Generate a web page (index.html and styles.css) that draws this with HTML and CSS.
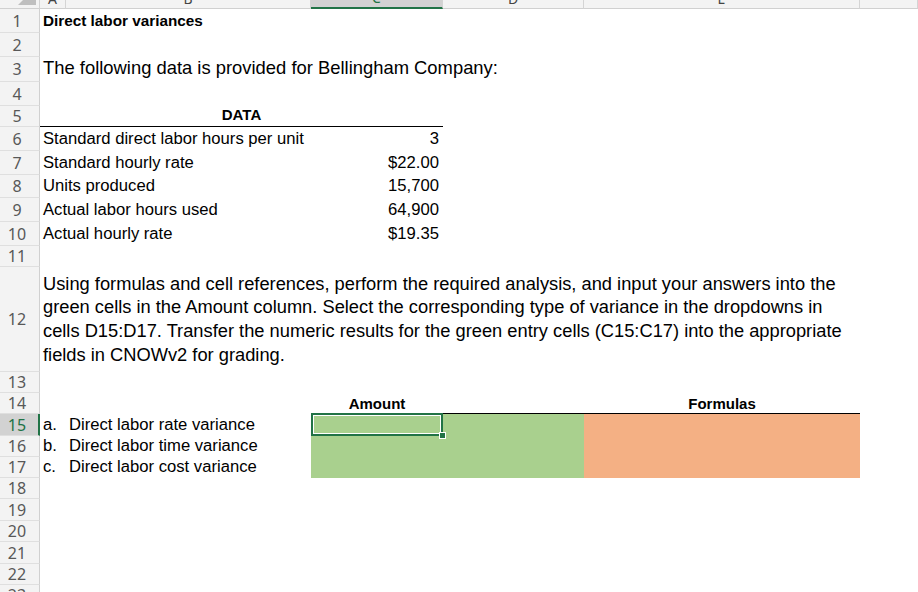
FILE: index.html
```html
<!DOCTYPE html>
<html lang="en">
<head>
    <meta charset="UTF-8">
    <meta name="viewport" content="width=device-width, initial-scale=1.0">
    <title>Direct labor variances</title>
    <link rel="stylesheet" href="styles.css">
</head>
<body>
    <div class="sheet">
        <!-- column headers (top half scrolled out of view) -->
        <div class="corner"><span class="corner-tri"></span></div>
        <div class="col-head">A</div>
        <div class="col-head">B</div>
        <div class="col-head selected">C</div>
        <div class="col-head">D</div>
        <div class="col-head">E</div>
        <div class="col-head"></div>

        <div class="row-head">1</div>
        <div class="cell span-all title">Direct labor variances</div>

        <div class="row-head">2</div>
        <div class="cell span-all"></div>

        <div class="row-head">3</div>
        <div class="cell span-all intro">The following data is provided for Bellingham Company:</div>

        <div class="row-head">4</div>
        <div class="cell span-all"></div>

        <div class="row-head">5</div>
        <div class="cell span-3 heading underline">DATA</div>
        <div class="cell span-3"></div>

        <div class="row-head">6</div>
        <div class="cell span-2 data">Standard direct labor hours per unit</div>
        <div class="cell data num">3</div>
        <div class="cell span-3"></div>

        <div class="row-head">7</div>
        <div class="cell span-2 data">Standard hourly rate</div>
        <div class="cell data num">$22.00</div>
        <div class="cell span-3"></div>

        <div class="row-head">8</div>
        <div class="cell span-2 data">Units produced</div>
        <div class="cell data num">15,700</div>
        <div class="cell span-3"></div>

        <div class="row-head">9</div>
        <div class="cell span-2 data">Actual labor hours used</div>
        <div class="cell data num">64,900</div>
        <div class="cell span-3"></div>

        <div class="row-head">10</div>
        <div class="cell span-2 data">Actual hourly rate</div>
        <div class="cell data num">$19.35</div>
        <div class="cell span-3"></div>

        <div class="row-head">11</div>
        <div class="cell span-all"></div>

        <div class="row-head">12</div>
        <div class="cell span-5 instructions">Using formulas and cell references, perform the required analysis, and input your answers into the green cells in the Amount column. Select the corresponding type of variance in the dropdowns in cells D15:D17. Transfer the numeric results for the green entry cells (C15:C17) into the appropriate fields in CNOWv2 for grading.</div>
        <div class="cell"></div>

        <div class="row-head">13</div>
        <div class="cell span-all"></div>

        <div class="row-head">14</div>
        <div class="cell span-2"></div>
        <div class="cell heading underline col-title">Amount</div>
        <div class="cell underline"></div>
        <div class="cell heading underline col-title">Formulas</div>
        <div class="cell"></div>

        <div class="row-head active">15</div>
        <div class="cell item">a.</div>
        <div class="cell item">Direct labor rate variance</div>
        <div class="cell entry active"></div>
        <div class="cell entry"></div>
        <div class="cell formula"></div>
        <div class="cell"></div>

        <div class="row-head">16</div>
        <div class="cell item">b.</div>
        <div class="cell item">Direct labor time variance</div>
        <div class="cell entry"></div>
        <div class="cell entry"></div>
        <div class="cell formula"></div>
        <div class="cell"></div>

        <div class="row-head">17</div>
        <div class="cell item">c.</div>
        <div class="cell item">Direct labor cost variance</div>
        <div class="cell entry"></div>
        <div class="cell entry"></div>
        <div class="cell formula"></div>
        <div class="cell"></div>

        <div class="row-head">18</div>
        <div class="cell span-all"></div>
        <div class="row-head">19</div>
        <div class="cell span-all"></div>
        <div class="row-head">20</div>
        <div class="cell span-all"></div>
        <div class="row-head">21</div>
        <div class="cell span-all"></div>
        <div class="row-head">22</div>
        <div class="cell span-all"></div>
        <div class="row-head">23</div>
        <div class="cell span-all"></div>
    </div>
</body>
</html>
```

FILE: styles.css
```css
body {
    margin: 0;
    background-color: #fff;
    overflow: hidden;
    font-family: 'Liberation Sans', Arial, sans-serif;
    color: #000;
}

.sheet {
    display: grid;
    grid-template-columns: 40px 26px 245px 132px 141px 276px 1fr;
    grid-template-rows:
        21px 24px 24px 25px 24px 21px
        24px 24px 23px 24px 24px 21px
        105px 21px 21px 22px 21px 21px
        21px 22px 21px 22px 21px 21px;
    margin-top: -12px;
}

/* headers */
.corner,
.col-head {
    position: relative;
    box-sizing: border-box;
    background-color: #f3f3f3;
    border-right: 1px solid #d4d4d4;
    border-bottom: 1px solid #d0d0d0;
    font-family: 'Noto Sans', sans-serif;
    font-size: 14px;
    color: #444;
    display: flex;
    align-items: center;
    justify-content: center;
}

.corner-tri {
    position: absolute;
    right: 3px;
    bottom: 3px;
    width: 0;
    height: 0;
    border-left: 18px solid transparent;
    border-bottom: 18px solid #bfbfbf;
}

.col-head.selected {
    background-color: #d2d2d2;
    color: #217346;
    border-bottom: 2px solid #217346;
}

.row-head {
    box-sizing: border-box;
    background-color: #f3f3f3;
    border-right: 1px solid #d0d0d0;
    border-bottom: 1px solid #dfdfdf;
    font-family: 'Noto Sans', sans-serif;
    font-size: 16px;
    color: #585858;
    display: flex;
    align-items: center;
    justify-content: center;
    padding-right: 5px;
}

.row-head.active {
    background-color: #d2d2d2;
    color: #217346;
    border-right: 2px solid #217346;
    padding-right: 4px;
}

/* cells */
.cell {
    box-sizing: border-box;
    display: flex;
    align-items: flex-end;
    padding: 0 3px 3px;
    white-space: nowrap;
    font-size: 16.65px;
}

.span-2 { grid-column: span 2; }
.span-3 { grid-column: span 3; }
.span-5 { grid-column: span 5; }
.span-all { grid-column: span 6; }

.title {
    font-size: 15.3px;
    font-weight: bold;
}

.intro {
    font-size: 18.4px;
}

.heading {
    font-size: 15px;
    font-weight: bold;
    justify-content: center;
}

.underline {
    border-bottom: 1px solid #000;
}

.col-title {
    padding-bottom: 1px;
}

.data {
    padding-bottom: 2.5px;
}

.num {
    justify-content: flex-end;
    padding-right: 4px;
}

.instructions {
    white-space: normal;
    font-size: 18.3px;
    line-height: 23.7px;
    padding-bottom: 5.5px;
}

.item {
    padding-bottom: 1px;
}

.entry {
    background-color: #a9d08e;
}

.formula {
    background-color: #f4b084;
}

.entry.active {
    position: relative;
}

.entry.active::after {
    content: '';
    position: absolute;
    top: -1px;
    left: 0;
    right: 0;
    bottom: 0;
    border: 2px solid #217346;
    box-shadow: inset 0 0 0 1px #fff;
}

.entry.active::before {
    content: '';
    position: absolute;
    right: -3px;
    bottom: -3px;
    width: 5px;
    height: 5px;
    background-color: #217346;
    border: 1px solid #fff;
    z-index: 1;
}
```
